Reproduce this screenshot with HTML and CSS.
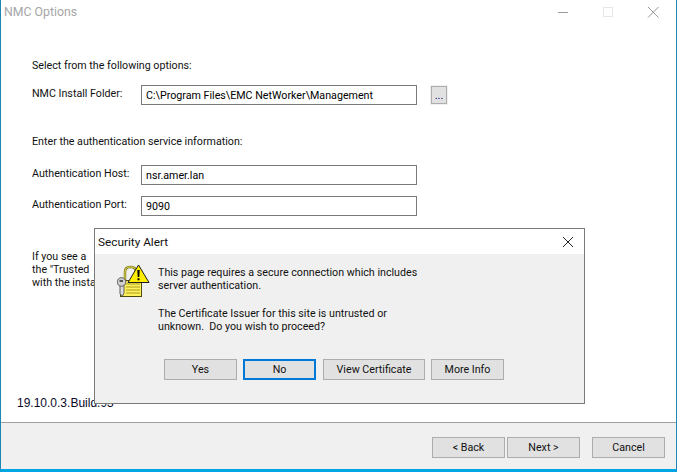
FILE: index.html
```html
<!DOCTYPE html>
<html lang="en">
<head>
    <meta charset="UTF-8">
    <title>NMC Options</title>
    <link rel="stylesheet" href="styles.css">
</head>
<body>

    <div class="window">
        <div class="titlebar">
            <span class="title">NMC Options</span>
            <div class="controls">
                <svg class="ctl" width="45" height="24" viewBox="0 0 45 24"><path d="M17 12.5h10" stroke="#999" fill="none"/></svg>
                <svg class="ctl" width="45" height="24" viewBox="0 0 45 24"><rect x="17.5" y="7.5" width="9" height="9" stroke="#e6e6e6" fill="none"/></svg>
                <svg class="ctl" width="45" height="24" viewBox="0 0 45 24"><path d="M17 7l10.500 10.500M27.500 7L17 17.500" stroke="#999" fill="none"/></svg>
            </div>
        </div>

        <div class="content">
            <div class="options">
                <p class="heading">Select from the following options:</p>
                <div class="row">
                    <label>NMC Install Folder:</label>
                    <div class="field">C:\Program Files\EMC NetWorker\Management</div>
                    <div class="browse-wrap"><button class="browse">...</button></div>
                </div>

                <p class="heading second">Enter the authentication service information:</p>
                <div class="row">
                    <label>Authentication Host:</label>
                    <div class="field">nsr.amer.lan</div>
                </div>
                <div class="row gap">
                    <label>Authentication Port:</label>
                    <div class="field">9090</div>
                </div>

                <p class="note">If you see a<br>the "Trusted<br>with the installation</p>
            </div>
            <div class="version">19.10.0.3.Build.93</div>
        </div>

        <div class="footer">
            <button class="btn">&lt; Back</button>
            <button class="btn next">Next &gt;</button>
            <button class="btn">Cancel</button>
        </div>

        <!-- dialog sits on top of the wizard -->
        <div class="dialog">
            <div class="dialog-title">
                <span>Security Alert</span>
                <svg width="12" height="12" viewBox="0 0 12 12"><path d="M1 1l10 10M11 1L1 11" stroke="#222" fill="none"/></svg>
            </div>
            <div class="dialog-body">
                <div class="message">
                    <svg class="alert-icon" width="34" height="34" viewBox="0 0 34 34">
                        <path d="M8 17V8q0-5 5-5h1q5 0 5 5v6" fill="none" stroke="#7d7a1e" stroke-width="2.500"/>
                        <path d="M8 17V8q0-5 5-5h1q5 0 5 5v6" fill="none" stroke="#e8dc50" stroke-width="1"/>
                        <rect x="3.500" y="16.500" width="21" height="16" fill="#fff15a" stroke="#4d4a10"/>
                        <path d="M9 20h14M9 23h14M9 26h14M9 29h14" stroke="#a89a20" fill="none"/>
                        <path d="M21.500 1L11 18.500h21z" fill="#ffee00" stroke="#1c1c1c" stroke-linejoin="round"/>
                        <path d="M20.300 6h2.400l-.4 7h-1.600zM20.500 14.200h2v2h-2z" fill="#000"/>
                        <path d="M3 21h4v8l-1.500 3-2.500-2z" fill="#dcdcdc" stroke="#5c5c5c"/>
                        <circle cx="4.500" cy="18" r="4.300" fill="#cfcfcf" stroke="#5c5c5c"/>
                        <rect x="2.500" y="16" width="3.500" height="2" fill="#555"/>
                    </svg>
                    <div class="message-text">
                        <p>This page requires a secure connection which includes<br>server authentication.</p>
                        <p>The Certificate Issuer for this site is untrusted or<br>unknown.&nbsp; Do you wish to proceed?</p>
                    </div>
                </div>
                <div class="dialog-buttons">
                    <button class="btn">Yes</button>
                    <button class="btn default">No</button>
                    <button class="btn wide">View Certificate</button>
                    <button class="btn">More Info</button>
                </div>
            </div>
        </div>
    </div>

</body>
</html>
```

FILE: styles.css
```css
body {
    margin: 0;
    font-family: Roboto, "Noto Sans", sans-serif;
    font-size: 10.7px;
    color: #111;
    background: #fff;
}

.window {
    position: relative;
    width: 677px;
    height: 472px;
    box-sizing: border-box;
    border-left: 1px solid #1c86b8;
    border-right: 1px solid #1c86b8;
    border-bottom: 3px solid #00a5e3;
    display: flex;
    flex-direction: column;
    overflow: hidden;
}

.titlebar {
    height: 24px;
    flex: none;
    display: flex;
    justify-content: space-between;
    align-items: center;
}

.title {
    margin-left: 3px;
    font-size: 12.3px;
    color: #a6a6a6;
}

.controls {
    display: flex;
}

.ctl {
    display: block;
}

.content {
    flex: 1;
    display: flex;
    flex-direction: column;
    justify-content: space-between;
    padding-left: 16px;
    padding-bottom: 12px;
}

.options {
    padding-left: 15px;
    padding-top: 33px;
}

.heading {
    margin: 0 0 10px;
    line-height: 18px;
}

.heading.second {
    margin-top: 28px;
    margin-bottom: 14px;
}

.row {
    display: flex;
    align-items: flex-start;
    height: 20px;
}

.row.gap {
    margin-top: 11px;
}

.row label {
    width: 109px;
    line-height: 17px;
}

.field {
    width: 276px;
    height: 20px;
    box-sizing: border-box;
    border: 1px solid #7a7a7a;
    padding-left: 4px;
    line-height: 20px;
    color: #000;
}

.browse-wrap {
    margin-left: 13px;
    padding: 1px;
    background: #f0f0f0;
}

.browse {
    display: block;
    width: 16px;
    height: 18px;
    padding: 0;
    border: 1px solid #adadad;
    background: #e1e1e1;
    color: #00006a;
    font-family: inherit;
    font-size: 11px;
}

.note {
    margin: 34px 0 0;
    line-height: 13px;
    white-space: nowrap;
}

.version {
    font-family: "Liberation Sans", Arial, sans-serif;
    font-size: 12px;
    line-height: 14px;
    color: #0a0a2a;
}

.footer {
    height: 47px;
    flex: none;
    box-sizing: border-box;
    border-top: 1px solid #a0a0a0;
    background: #f0f0f0;
    display: flex;
    justify-content: flex-end;
    align-items: flex-start;
    padding-top: 14px;
    padding-right: 11px;
}

.btn {
    width: 73px;
    height: 21px;
    padding: 0;
    border: 1px solid #adadad;
    background: #e1e1e1;
    color: #111;
    font-family: inherit;
    font-size: 10.7px;
}

.footer .btn {
    margin-left: 2px;
}

.footer .next {
    margin-right: 10px;
}

.dialog {
    position: absolute;
    left: 93px;
    top: 228px;
    width: 491px;
    height: 176px;
    box-sizing: border-box;
    border: 1px solid #7a7a7a;
    display: flex;
    flex-direction: column;
}

.dialog-title {
    height: 25px;
    flex: none;
    background: #fff;
    display: flex;
    justify-content: space-between;
    align-items: center;
    padding: 0 10px 0 3px;
    font-size: 11.8px;
    color: #111;
}

.dialog-body {
    flex: 1;
    background: #f0f0f0;
    display: flex;
    flex-direction: column;
    justify-content: space-between;
    padding-bottom: 23px;
}

.message {
    display: flex;
    padding-top: 10px;
    padding-left: 22px;
}

.alert-icon {
    flex: none;
}

.message-text {
    margin-left: 7px;
    padding-top: 2px;
}

.message-text p {
    margin: 0 0 15px;
    line-height: 13px;
}

.dialog-buttons {
    display: flex;
    gap: 6px;
    padding-left: 69px;
}

.btn.default {
    border: 2px solid #0078d7;
}

.btn.wide {
    width: 102px;
    margin-left: 1px;
}
```
